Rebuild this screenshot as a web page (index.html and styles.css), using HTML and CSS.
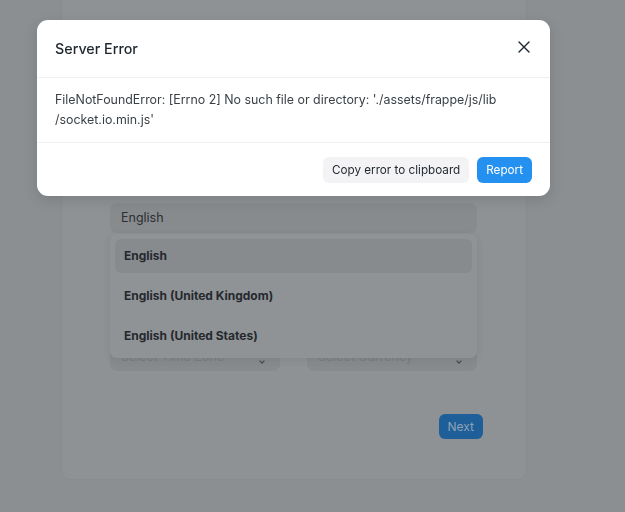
FILE: index.html
```html
<!DOCTYPE html>
<html>
<head>
<meta charset="utf-8">
<link rel="stylesheet" href="styles.css">
</head>
<body>
<div class="page">
  <div class="card">
    <div class="field-lang">
      <div class="input">English</div>
      <div class="dropdown">
        <div class="option active">English</div>
        <div class="option">English (United Kingdom)</div>
        <div class="option">English (United States)</div>
      </div>
    </div>
    <div class="row">
      <div class="select">Select Time Zone<svg class="chev" width="6" height="4" viewBox="0 0 6 4"><path d="M0.6 0.6L3 3.2L5.4 0.6" fill="none" stroke="#45494d" stroke-width="1.1"/></svg></div>
      <div class="select">Select Currency<svg class="chev" width="6" height="4" viewBox="0 0 6 4"><path d="M0.6 0.6L3 3.2L5.4 0.6" fill="none" stroke="#45494d" stroke-width="1.1"/></svg></div>
    </div>
    <div class="actions"><span class="next">Next</span></div>
  </div>
</div>
<div class="modal">
  <div class="modal-header">
    <span class="title">Server Error</span>
    <svg class="close" width="12" height="12" viewBox="0 0 12 12"><path d="M1 1L11 11M11 1L1 11" stroke="#1f272e" stroke-width="1.4" stroke-linecap="round"/></svg>
  </div>
  <div class="modal-body">FileNotFoundError: [Errno 2] No such file or directory: './assets/frappe/js/lib<br>/socket.io.min.js'</div>
  <div class="modal-footer">
    <span class="btn btn-default">Copy error to clipboard</span>
    <span class="btn btn-primary">Report</span>
  </div>
</div>
</body>
</html>
```
FILE: styles.css
```css
html, body { margin: 0; padding: 0; }
body {
  width: 625px; height: 512px; overflow: hidden;
  background: #8b8f92;
  font-family: Inter, "Noto Sans", sans-serif;
  color: #25292d;
}
.page { padding: 0 99px 0 61px; }
.card {
  box-sizing: border-box;
  width: 466px; height: 480px;
  background: #8e9295;
  border: 1px solid #888c8f;
  border-top: none;
  border-radius: 0 0 9px 9px;
  padding: 203px 49px 0 48px;
  display: flex; flex-direction: column;
}
.field-lang { position: relative; }
.input {
  height: 30px; box-sizing: border-box;
  background: #878b8e; border-radius: 7px;
  padding: 7px 11px; font-size: 12.5px; line-height: 16px; color: #2b2f33;
}
.dropdown {
  position: absolute; left: 0; right: 0; top: 31px;
  background: #8f9396; border-radius: 7px;
  box-shadow: 0 2px 8px rgba(0,0,0,0.08);
  padding: 5px;
  z-index: 2;
}
.option {
  height: 34px; margin-bottom: 6px; box-sizing: border-box;
  padding: 8px 9px; border-radius: 6px;
  font-size: 12px; font-weight: 700; line-height: 17px; color: #25292d;
}
.option:last-child { margin-bottom: 0; }
.option.active { background: #878b8e; }
.row { display: flex; gap: 27px; margin-top: 107px; }
.select {
  flex: 1; height: 31px; box-sizing: border-box;
  background: #878b8e; border-radius: 7px;
  padding: 9px 11px 0; font-size: 12.5px; line-height: 16px; color: #7a7e81;
  display: flex; justify-content: space-between; align-items: flex-start;
}
.chev { margin-top: 11px; margin-right: 4px; }
.actions { display: flex; justify-content: flex-end; margin-top: 43px; margin-right: -6px; }
.next {
  background: #1f5f99; color: #8ea2b6; border-radius: 6px;
  font-size: 12px; padding: 5px 9px; line-height: 15px;
}
.modal {
  position: fixed; left: 37px; top: 20px; width: 513px;
  background: #fff; border-radius: 11px;
  box-shadow: 0 4px 14px rgba(0,0,0,0.12);
}
.modal-header {
  height: 58px; box-sizing: border-box;
  padding: 0 20px 0 18px;
  display: flex; align-items: center; justify-content: space-between;
  border-bottom: 1px solid #eef0f2;
}
.title { font-size: 14.3px; font-weight: 500; color: #1f272e; }
.close { margin-top: -4px; }
.modal-body {
  padding: 12px 18px 12px;
  font-size: 12.4px; line-height: 20px; color: #383f45;
  border-bottom: 1px solid #eef0f2;
}
.modal-footer {
  padding: 14px 18px 13px;
  display: flex; justify-content: flex-end; gap: 8px;
}
.btn { font-size: 11.7px; line-height: 16px; padding: 5px 9px; border-radius: 6px; }
.btn-default { background: #f3f3f5; color: #1f272e; }
.btn-primary { background: #2490ef; color: #fff; }
```
